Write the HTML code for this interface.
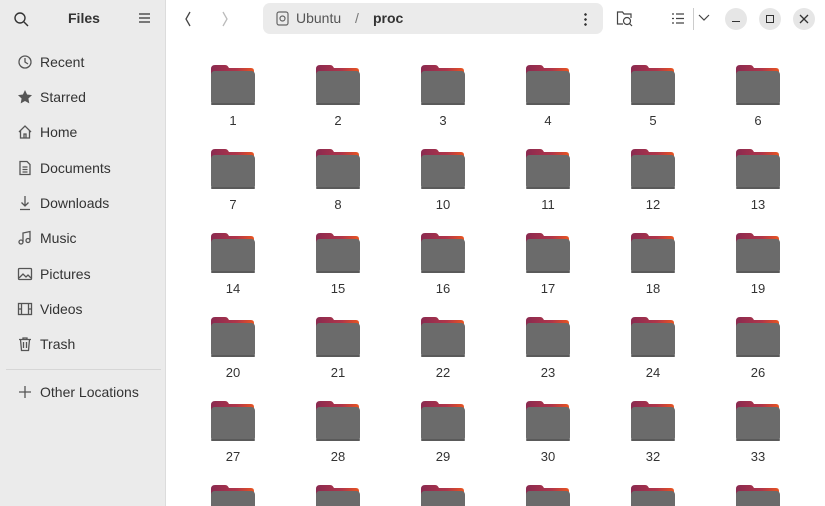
<!DOCTYPE html><html><head><style>
*{margin:0;padding:0;box-sizing:border-box}
html,body{width:825px;height:506px;overflow:hidden}
body{background:#fff;font-family:"Liberation Sans","DejaVu Sans",sans-serif;position:relative;color:#333}
.side{position:absolute;left:0;top:0;width:166px;height:506px;background:#ebebeb;border-right:1px solid #dcdcdc}
.it{position:absolute;left:17px;font-size:14px;color:#333;display:flex;align-items:center}
.it svg{width:16px;height:16px;margin-right:7px}
.f{position:absolute;width:44px;height:40px}
.l{position:absolute;width:80px;text-align:center;font-size:13px;color:#333}
.btn{position:absolute;top:8px;width:22px;height:22px;border-radius:50%;background:#e6e6e6}
</style></head><body>
<div class="side">
<svg style="position:absolute;left:13px;top:11px" width="16" height="16" viewBox="0 0 16 16" fill="none" stroke="#333" stroke-width="1.4"><circle cx="7" cy="7" r="5"/><path d="M11 11l4 4"/></svg>
<div style="position:absolute;left:68px;top:10px;font-weight:bold;font-size:14px">Files</div>
<svg style="position:absolute;left:139px;top:13px" width="11" height="10" viewBox="0 0 11 10" stroke="#333" stroke-width="1.2"><path d="M0 1h11M0 5h11M0 9h11"/></svg>
<div class="it" style="top:54px"><svg viewBox="0 0 16 16" fill="none" stroke="#555" stroke-width="1.3"><circle cx="8" cy="8" r="6"/><path d="M8 4v4l3 2"/></svg>Recent</div>
<div class="it" style="top:89px"><svg viewBox="0 0 16 16"><path fill="#555" d="M8 1l2.1 4.5 4.9.6-3.6 3.4.9 4.9L8 12l-4.3 2.4.9-4.9L1 6.1l4.9-.6z"/></svg>Starred</div>
<div class="it" style="top:124px"><svg viewBox="0 0 16 16" fill="none" stroke="#555" stroke-width="1.3"><path d="M2 8l6-6 6 6M3.5 7v7h9V7M7 14v-4h2v4"/></svg>Home</div>
<div class="it" style="top:160px"><svg viewBox="0 0 16 16" fill="none" stroke="#555" stroke-width="1.3"><path d="M3 1.5h7l3 3v10H3zM5.5 7h5M5.5 9.5h5M5.5 12h5"/></svg>Documents</div>
<div class="it" style="top:195px"><svg viewBox="0 0 16 16" fill="none" stroke="#555" stroke-width="1.3"><path d="M8 1v10M4.5 7.5L8 11l3.5-3.5M3 14.5h10"/></svg>Downloads</div>
<div class="it" style="top:230px"><svg viewBox="0 0 16 16" fill="none" stroke="#555" stroke-width="1.3"><path d="M6 12V3l7-1.5v9"/><circle cx="4" cy="12" r="2"/><circle cx="11" cy="10.5" r="2"/></svg>Music</div>
<div class="it" style="top:266px"><svg viewBox="0 0 16 16" fill="none" stroke="#555" stroke-width="1.3"><rect x="1.5" y="2.5" width="13" height="11" rx="1"/><path d="M2 12l4-4 3 3 2-2 3 3"/></svg>Pictures</div>
<div class="it" style="top:301px"><svg viewBox="0 0 16 16" fill="none" stroke="#555" stroke-width="1.3"><rect x="1.5" y="2.5" width="13" height="11"/><path d="M4.5 2.5v11M11.5 2.5v11M1.5 8h3M11.5 8h3"/></svg>Videos</div>
<div class="it" style="top:336px"><svg viewBox="0 0 16 16" fill="none" stroke="#555" stroke-width="1.3"><path d="M2 3.5h12M6 3.5V2h4v1.5M3.5 3.5l1 11h7l1-11M6.5 6v6M9.5 6v6"/></svg>Trash</div>
<div style="position:absolute;left:6px;top:369px;width:155px;border-top:1px solid #d6d6d6"></div>
<div class="it" style="top:384px"><svg viewBox="0 0 16 16" stroke="#555" stroke-width="1.3"><path d="M8 2v12M2 8h12"/></svg>Other Locations</div>
</div>
<svg style="position:absolute;left:183px;top:11px" width="10" height="16" viewBox="0 0 10 16" fill="none" stroke="#444" stroke-width="1.3"><path d="M7 1L3 8l4 7"/></svg>
<svg style="position:absolute;left:220px;top:11px" width="10" height="16" viewBox="0 0 10 16" fill="none" stroke="#bbb" stroke-width="1.3"><path d="M3 1l4 7-4 7"/></svg>
<div style="position:absolute;left:263px;top:3px;width:340px;height:31px;background:#ebebeb;border-radius:7px"></div>
<svg style="position:absolute;left:276px;top:11px" width="13" height="15" viewBox="0 0 13 15" fill="none" stroke="#666" stroke-width="1.2"><rect x="1" y="1" width="11" height="13" rx="2"/><circle cx="6.5" cy="7.5" r="2.5"/></svg>
<div style="position:absolute;left:296px;top:10px;font-size:14px;color:#555">Ubuntu</div>
<div style="position:absolute;left:355px;top:10px;font-size:14px;color:#777">/</div>
<div style="position:absolute;left:373px;top:10px;font-size:14px;font-weight:bold;color:#333">proc</div>
<div style="position:absolute;left:584px;top:12px;width:3px;height:14px;background:radial-gradient(circle,#333 1.2px,transparent 1.4px) 0 0/3px 5px"></div>
<svg style="position:absolute;left:616px;top:10px" width="18" height="17" viewBox="0 0 18 17" fill="none" stroke="#444" stroke-width="1.2"><path d="M7 14H1.5V2h5l1.5 2h7v4"/><circle cx="11" cy="11" r="3.5"/><path d="M13.5 13.5l2.5 2.5"/></svg>
<svg style="position:absolute;left:671px;top:12px" width="14" height="13" viewBox="0 0 14 13" stroke="#444" stroke-width="1.3"><path d="M1 2h2M5 2h8M1 6.5h2M5 6.5h8M1 11h2M5 11h8"/></svg>
<div style="position:absolute;left:693px;top:8px;height:22px;border-left:1px solid #ccc"></div>
<svg style="position:absolute;left:698px;top:14px" width="12" height="8" viewBox="0 0 12 8" fill="none" stroke="#444" stroke-width="1.2"><path d="M1 1l5 5 5-5"/></svg>
<div class="btn" style="left:725px"><div style="position:absolute;left:7px;top:13px;width:8px;border-top:1.3px solid #333"></div></div>
<div class="btn" style="left:759px"><div style="position:absolute;left:7px;top:7px;width:8px;height:8px;border:1.3px solid #333"></div></div>
<div class="btn" style="left:793px"><svg style="position:absolute;left:6px;top:6px" width="10" height="10" viewBox="0 0 10 10" stroke="#333" stroke-width="1.3"><path d="M1 1l8 8M9 1l-8 8"/></svg></div>
<svg width="0" height="0" style="position:absolute"><defs>
<linearGradient id="g" x1="0" x2="1"><stop offset="0" stop-color="#8a2a50"/><stop offset=".6" stop-color="#b0354a"/><stop offset="1" stop-color="#e95420"/></linearGradient>
</defs></svg>
<div id="grid"></div>
<script>
var n=[1,2,3,4,5,6,7,8,10,11,12,13,14,15,16,17,18,19,20,21,22,23,24,26,27,28,29,30,32,33,'','','','','',''];
var h='';
var fs='<path d="M0 4q0-4 4-4h10q2 0 3 1.5l1 1.5h22q3 0 3 3v8H0z" fill="url(#g)"/><rect x="0" y="6" width="44" height="34" rx="3.5" fill="#6b6b6b"/><rect x="0" y="38" width="44" height="2" rx="1" fill="#5a5a5a"/>';
for(var i=0;i<36;i++){var c=i%6,r=Math.floor(i/6),x=211+c*105,y=65+r*84;
h+='<svg class="f" viewBox="0 0 44 40" style="left:'+x+'px;top:'+y+'px">'+fs+'</svg>';
if(n[i]!=='')h+='<div class="l" style="left:'+(x-18)+'px;top:'+(y+48)+'px">'+n[i]+'</div>';}
document.getElementById('grid').innerHTML=h;
</script>
</body></html>
